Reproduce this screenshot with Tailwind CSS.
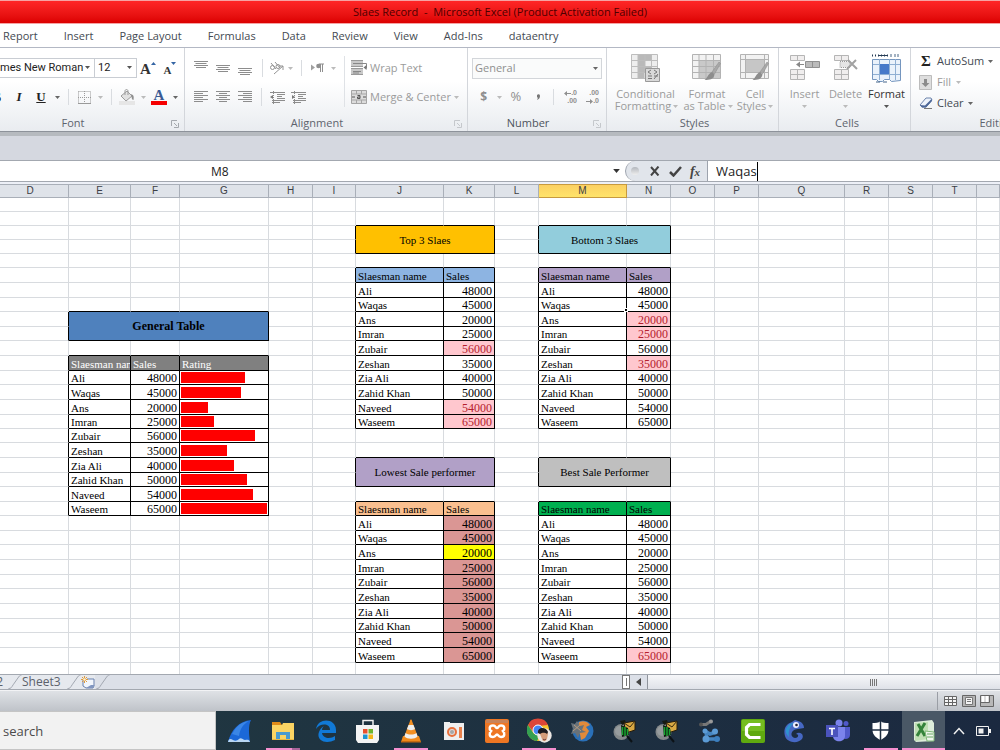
<!DOCTYPE html>
<html lang="en">

<head>
    <meta charset="UTF-8">
    <meta name="viewport" content="width=device-width, initial-scale=1.0">
    <title>Slaes Record - Microsoft Excel (Product Activation Failed)</title>
    <script src="https://cdn.jsdelivr.net/npm/@tailwindcss/browser@4"></script>
</head>

<body class="h-screen flex flex-col overflow-hidden bg-[#d5d9e1] font-['Open_Sans',sans-serif] text-[11px] text-[#444a52]">
    <!-- Shared symbols -->
    <svg class="hidden" xmlns="http://www.w3.org/2000/svg">
        <symbol id="caret" viewBox="0 0 5 3"><path d="M0 0h5L2.5 3z" fill="currentColor" /></symbol>
        <symbol id="launcher" viewBox="0 0 8 8">
            <path d="M.5 6V.5H6M3 3l3 3M7.5 3v4.500H3" fill="none" stroke="currentColor" />
        </symbol>
        <symbol id="slash" viewBox="0 0 14 15">
            <path d="M0 14.500c3 0 3-1 5-4L11 2c1-1.500 2-2 3-2" fill="none" stroke="#9da3ac" />
        </symbol>
        <symbol id="brush" viewBox="0 0 16 20">
            <path d="M14.500 0L16 1.500 10 12 7.500 10z" fill="#a8a8a8" stroke="#8a8a8a" stroke-width=".5" />
            <path d="M7.500 10l2.500 2.500c-1 5-5 5.500-10 5.500 3-1.500 3-6 7.500-8z" fill="#8d8d8d" />
        </symbol>
        <symbol id="snail" viewBox="0 0 24 24">
            <circle cx="8.500" cy="13" r="8" fill="#84898b" />
            <circle cx="7" cy="12" r="5" fill="#979c9e" />
            <path d="M7 2l5-1 1 3-4 2z" fill="#151a12" />
            <path d="M11 4l11-2v9l-9 3z" fill="#d8a843" stroke="#241b0b" />
            <path d="M11 4l6 4 5-6" fill="none" stroke="#3a2c10" />
            <path d="M8 6l7 3 1 7-7 2z" fill="#0c1d0e" />
            <path d="M9.500 8v8M12 8v9M14.500 10v6" stroke="#18a432" stroke-width="1.500" />
            <path d="M14 17l5 6" stroke="#0c1216" stroke-width="2" />
        </symbol>
    </svg>

    <!-- Title bar -->
    <header class="shrink-0 h-[24px] border-y border-[#f6a3a3] bg-linear-to-b from-[#ff2626] to-[#dc0000] flex items-center justify-center">
        <h1 class="text-[11px] text-[#4d0000] whitespace-pre">Slaes Record  -  Microsoft Excel (Product Activation Failed)</h1>
    </header>

    <!-- Ribbon tabs -->
    <nav class="shrink-0 h-[24px] bg-white border-b border-[#b3b8c4] flex items-center gap-[26px] pl-[3px] pt-[2px] whitespace-nowrap">
        <a href="#">Report</a>
        <a href="#">Insert</a>
        <a href="#">Page Layout</a>
        <a href="#">Formulas</a>
        <a href="#">Data</a>
        <a href="#">Review</a>
        <a href="#">View</a>
        <a href="#">Add-Ins</a>
        <a href="#">dataentry</a>
    </nav>

    <!-- Ribbon -->
    <div class="shrink-0 h-[83px] flex overflow-hidden bg-linear-to-b from-white from-40% to-[#e9ecf0] whitespace-nowrap">
        <!-- Font -->
        <section class="relative w-[185px] shrink-0 border-r border-[#d3d6db] flex flex-col pt-[10px]">
            <div class="h-[20px] flex items-center">
                <div class="relative w-[95px] h-[20px]">
                    <select aria-label="Font" class="appearance-none w-full h-full bg-white border border-l-0 border-[#c9cdd3] font-['Roboto',sans-serif] text-[#222] outline-none">
                        <option>mes New Roman</option>
                    </select>
                    <svg class="absolute right-[5px] top-[8px] w-[5px] h-[3px] text-[#555]"><use href="#caret" /></svg>
                </div>
                <div class="relative w-[42px] h-[20px]">
                    <select aria-label="Font size" class="appearance-none w-full h-full bg-white border border-l-0 border-[#c9cdd3] pl-[3px] font-['Roboto',sans-serif] text-[#222] outline-none">
                        <option>12</option>
                    </select>
                    <svg class="absolute right-[5px] top-[8px] w-[5px] h-[3px] text-[#555]"><use href="#caret" /></svg>
                </div>
                <button aria-label="Grow font" class="w-[22px] h-[20px] pt-px flex justify-center font-['Liberation_Serif',serif] font-bold text-[15px] leading-[20px] text-[#333]">A<svg class="w-[5px] h-[3px] mt-[3px] rotate-180 text-[#3465a4]"><use href="#caret" /></svg></button>
                <button aria-label="Shrink font" class="w-[22px] h-[20px] pt-[2px] flex justify-center font-['Liberation_Serif',serif] font-bold text-[11px] leading-[20px] text-[#333]">A<svg class="w-[5px] h-[3px] mt-[2px] text-[#3465a4]"><use href="#caret" /></svg></button>
            </div>
            <div class="h-[20px] mt-[9px] flex items-center text-[#666]">
                <button class="w-[8px] flex justify-end overflow-hidden pr-[7px] font-['Liberation_Serif',serif] font-bold text-[14px] text-[#222]">B</button>
                <button class="w-[22px] font-['Liberation_Serif',serif] font-bold italic text-[13px] text-[#222]">I</button>
                <button class="w-[22px] font-['Liberation_Serif',serif] font-bold underline text-[13px] text-[#222]">U</button>
                <button aria-label="Underline styles" class="w-[10px] flex justify-center"><svg class="w-[5px] h-[3px]"><use href="#caret" /></svg></button>
                <div class="w-[13px] flex justify-center"><div class="w-px h-[16px] bg-[#d9dce0]"></div></div>
                <button aria-label="Borders" class="w-[19px] flex justify-center">
                    <svg class="w-[13px] h-[13px]" viewBox="0 0 13 13" fill="none" stroke="#9a9a9a"><path d="M.5.5h12v11M.5.5v11M6.500 0v12M0 6.500h13" stroke-dasharray="1 1" /><path d="M0 12.500h13" /></svg>
                </button>
                <button aria-label="Border styles" class="w-[12px] flex justify-center text-[#bbb]"><svg class="w-[5px] h-[3px]"><use href="#caret" /></svg></button>
                <div class="w-[10px] flex justify-center"><div class="w-px h-[16px] bg-[#d9dce0]"></div></div>
                <button aria-label="Fill color" class="w-[22px] flex justify-center">
                    <svg class="w-[16px] h-[16px]" viewBox="0 0 16 16"><path d="M0 12h16v4H0z" fill="#e6e6e6" /><path d="M2 7l6-5 5 5-6 5z" fill="#e2e2e2" stroke="#9b9b9b" /><path d="M6 6V2c0-2 3-2 3 0v4" fill="none" stroke="#9b9b9b" /><path d="M12 5c3 1 3 3 2.500 6-1 0-2-1-2-4z" fill="#8f8f8f" /></svg>
                </button>
                <button aria-label="Fill colors" class="w-[10px] flex justify-center text-[#bbb]"><svg class="w-[5px] h-[3px]"><use href="#caret" /></svg></button>
                <button aria-label="Font color" class="w-[22px] flex flex-col items-center font-['Liberation_Serif',serif] font-bold text-[15px] leading-[12px] text-[#3a5a94]">A<span class="w-[16px] h-[4px] bg-[#f50000]"></span></button>
                <button aria-label="Font colors" class="w-[10px] flex justify-center"><svg class="w-[5px] h-[3px]"><use href="#caret" /></svg></button>
            </div>
            <h2 class="mt-auto h-[16px] leading-[16px] pr-[38px] text-center text-[#5d636d]">Font</h2>
            <svg class="absolute right-[5px] bottom-[3px] w-[8px] h-[8px] text-[#a5a9ae]"><use href="#launcher" /></svg>
        </section>

        <!-- Alignment -->
        <section class="relative w-[283px] shrink-0 border-r border-[#d3d6db] flex flex-col pt-[8px]">
            <div class="flex text-[#9b9b9b]">
                <div class="w-[160px] border-r border-[#dfe2e6] pl-[5px] pt-[2px]">
                    <div class="h-[20px] flex items-center">
                        <button aria-label="Top align" class="w-[22px] flex justify-center"><svg class="w-[14px] h-[14px]" viewBox="0 0 14 14" stroke="#8d8d8d"><path d="M0 .5h14M1.500 2.500h11M0 4.500h14M2 6.500h10" /></svg></button>
                        <button aria-label="Middle align" class="w-[22px] flex justify-center"><svg class="w-[14px] h-[14px]" viewBox="0 0 14 14" stroke="#8d8d8d"><path d="M0 4.500h14M1.500 6.500h11M0 8.500h14M2 10.500h10" /></svg></button>
                        <button aria-label="Bottom align" class="w-[22px] flex justify-center"><svg class="w-[14px] h-[14px]" viewBox="0 0 14 14" stroke="#8d8d8d"><path d="M0 7.500h14M1.500 9.500h11M0 11.500h14M2 13.500h10" /></svg></button>
                        <div class="w-[12px] flex justify-center"><div class="w-px h-[18px] bg-[#d9dce0]"></div></div>
                        <button aria-label="Orientation" class="w-[18px] flex justify-center"><svg class="w-[16px] h-[14px]" viewBox="0 0 16 14" fill="none" stroke="#949494"><circle cx="3.500" cy="6.500" r="2" /><path d="M2 2l5 6M6 1l5 6M5 13l9-8M14 9V5h-3.500" /><circle cx="9" cy="5.500" r="2" /></svg></button>
                        <button aria-label="Orientations" class="w-[8px] flex justify-center text-[#bbb]"><svg class="w-[5px] h-[3px]"><use href="#caret" /></svg></button>
                        <div class="w-[14px] flex justify-center"><div class="w-px h-[16px] bg-[#d9dce0]"></div></div>
                        <button aria-label="Text direction" class="w-[18px] flex justify-center"><svg class="w-[13px] h-[10px]" viewBox="0 0 13 10"><path d="M0 1.500L4 4.500 0 7.500z" fill="#a0a0a0" /><path d="M8 1h5M9.500 1v8M11.500 1v8" stroke="#8f8f8f" /><circle cx="7.500" cy="3" r="2.300" fill="#8f8f8f" /></svg></button>
                        <button aria-label="Text directions" class="w-[14px] flex justify-center text-[#bbb]"><svg class="w-[5px] h-[3px]"><use href="#caret" /></svg></button>
                    </div>
                    <div class="h-[20px] mt-[9px] flex items-center">
                        <button aria-label="Align left" class="w-[22px] flex justify-center"><svg class="w-[14px] h-[12px]" viewBox="0 0 14 12" stroke="#8d8d8d"><path d="M0 .5h14M0 2.500h9M0 4.500h14M0 6.500h9M0 8.500h14M0 10.500h9" /></svg></button>
                        <button aria-label="Center" class="w-[22px] flex justify-center"><svg class="w-[14px] h-[12px]" viewBox="0 0 14 12" stroke="#8d8d8d"><path d="M0 .5h14M3 2.500h8M0 4.500h14M3 6.500h8M0 8.500h14M3 10.500h8" /></svg></button>
                        <button aria-label="Align right" class="w-[22px] flex justify-center"><svg class="w-[14px] h-[12px]" viewBox="0 0 14 12" stroke="#8d8d8d"><path d="M0 .5h14M5 2.500h9M0 4.500h14M5 6.500h9M0 8.500h14M5 10.500h9" /></svg></button>
                        <div class="w-[10px] flex justify-center"><div class="w-px h-[18px] bg-[#d9dce0]"></div></div>
                        <button aria-label="Decrease indent" class="w-[22px] flex justify-center"><svg class="w-[15px] h-[13px]" viewBox="0 0 15 13" stroke="#8d8d8d"><path d="M0 1.500h15M7 3.500h8M7 5.500h5M7 7.500h8M2 9.500h13M2 11.500h8" /><path d="M3.500 0v13" stroke-dasharray="1 1" /><path d="M0 6l3-2v4z" fill="#777" stroke="none" /></svg></button>
                        <button aria-label="Increase indent" class="w-[20px] flex justify-center"><svg class="w-[15px] h-[13px]" viewBox="0 0 15 13" stroke="#8d8d8d"><path d="M0 1.500h15M7 3.500h8M7 5.500h5M7 7.500h8M2 9.500h13M2 11.500h8" /><path d="M3.500 0v13" stroke-dasharray="1 1" /><path d="M4 6L1 4v4z" fill="#777" stroke="none" /></svg></button>
                    </div>
                </div>
                <div class="pl-[6px] pt-[2px]">
                    <button class="h-[20px] flex items-center gap-[3px]">
                        <svg class="w-[16px] h-[16px]" viewBox="0 0 16 16"><path d="M0 1h12v5H0zM0 8.500h12v6H0z" fill="#c9c9c9" /><path d="M0 .5h12M0 6.500h12M0 8.500h12M0 14.500h12" stroke="#9a9a9a" /><path d="M2 3.500h13.500v5M2 11.500h8M2 13h6" fill="none" stroke="#888" /><path d="M15.500 5v5l-3-2.500z" fill="#777" /></svg>
                        Wrap Text
                    </button>
                    <button class="h-[20px] mt-[9px] flex items-center gap-[3px]">
                        <svg class="w-[16px] h-[14px]" viewBox="0 0 16 14"><path d="M.5.5h15v13H.5zM.5 4h15M.5 10h15M5.500.5V4M10.500.5V4M5.500 10v3.500M10.500 10v3.500" fill="#dcdcdc" stroke="#a5a5a5" /><path d="M1 7h3M12 7h3M6.500 5.500h2.500v3H6.500V7H9" fill="none" stroke="#555" /></svg>
                        Merge &amp; Center
                        <svg class="w-[5px] h-[3px] text-[#bbb]"><use href="#caret" /></svg>
                    </button>
                </div>
            </div>
            <h2 class="mt-auto h-[16px] leading-[16px] pr-[18px] text-center text-[#5d636d]">Alignment</h2>
            <svg class="absolute right-[5px] bottom-[3px] w-[8px] h-[8px] text-[#c5c8cc]"><use href="#launcher" /></svg>
        </section>

        <!-- Number -->
        <section class="relative w-[139px] shrink-0 border-r border-[#d3d6db] flex flex-col pt-[10px] px-[4px] text-[#8f8f8f]">
            <div class="relative h-[21px]">
                <select aria-label="Number format" class="appearance-none w-full h-full bg-[#fafbfb] border border-[#d3d6da] pl-[2px] outline-none">
                    <option>General</option>
                </select>
                <svg class="absolute right-[4px] top-[9px] w-[5px] h-[3px] text-[#666]"><use href="#caret" /></svg>
            </div>
            <div class="h-[20px] mt-[8px] flex items-center">
                <button class="w-[24px] font-bold text-[12px]">$</button>
                <button aria-label="Currency formats" class="w-[8px] flex justify-center text-[#bbb]"><svg class="w-[5px] h-[3px]"><use href="#caret" /></svg></button>
                <button class="w-[26px] text-[13px]">%</button>
                <button aria-label="Comma style" class="w-[20px] flex justify-center text-[#777]"><svg class="w-[5px] h-[6px]" viewBox="0 0 5 6"><path d="M1 1c1-1 3-1 3 1S3 5 1 6c1-2 1-2 0-3z" fill="currentColor" /></svg></button>
                <div class="w-[10px] flex justify-center"><div class="w-px h-[16px] bg-[#d9dce0]"></div></div>
                <button aria-label="Increase decimal" class="w-[22px] shrink-0 flex flex-col items-end pr-[3px] font-['Liberation_Sans',sans-serif] font-bold text-[7px] leading-[8px]">
                    <span class="flex items-center"><svg class="w-[7px] h-[5px]" viewBox="0 0 7 5"><path d="M0 2.500L3 0v5zM3 2h4v1H3z" fill="currentColor" /></svg>.0</span>
                    <span>.00</span>
                </button>
                <button aria-label="Decrease decimal" class="w-[22px] shrink-0 flex flex-col items-end pr-[3px] font-['Liberation_Sans',sans-serif] font-bold text-[7px] leading-[8px]">
                    <span>.00</span>
                    <span class="flex items-center"><svg class="w-[7px] h-[5px]" viewBox="0 0 7 5"><path d="M7 2.500L4 0v5zM0 2h4v1H0z" fill="currentColor" /></svg>.0</span>
                </button>
            </div>
            <h2 class="mt-auto h-[16px] leading-[16px] pr-[18px] text-center text-[#4d535d]">Number</h2>
            <svg class="absolute right-[5px] bottom-[3px] w-[8px] h-[8px] text-[#c5c8cc]"><use href="#launcher" /></svg>
        </section>

        <!-- Styles -->
        <section class="w-[172px] shrink-0 border-r border-[#d3d6db] flex flex-col pt-[6px] pl-[4px] text-[#9b9b9b]">
            <div class="flex leading-[12px]">
                <button class="w-[69px] flex flex-col items-center">
                    <svg class="w-[30px] h-[28px] mb-[6px]" viewBox="0 0 30 28"><path d="M.5.5h26v24H.5z" fill="#eee" /><path d="M7 .5h13v6H7zM7 6h7v6H7zM7 12h13v6H7zM7 18h6v6H7z" fill="#b9b9b9" /><path d="M.5.5h26v24H.5zM7 .5v24M14 .5v24M20.500.5v24M.5 6.500h26M.5 12.500h26M.5 18.500h26" fill="none" stroke="#bdbdbd" /><path d="M14.500 14.500h14v13h-14z" fill="#d9d9d9" stroke="#999" /><path d="M20 16l-3 2 3 2M17 22h4M17 24.500h4M23 16l3 2-3 2M23 25l4-5M23 22h4" fill="none" stroke="#777" /></svg>
                    <span>Conditional</span>
                    <span class="flex items-center gap-[2px] pl-[2px]">Formatting<svg class="w-[5px] h-[3px] text-[#bbb]"><use href="#caret" /></svg></span>
                </button>
                <button class="w-[54px] flex flex-col items-center">
                    <svg class="w-[30px] h-[28px] mb-[6px]" viewBox="0 0 30 28"><path d="M.5.5h28v24H.5z" fill="#f2f2f2" /><path d="M7 6h22v18H7z" fill="#c9c9c9" /><path d="M.5.5h28v24H.5zM7 .5v24M14 .5v24M21.500.5v24M.5 6.500h28M.5 12.500h28M.5 18.500h28" fill="none" stroke="#b3b3b3" /><use href="#brush" x="11" y="8" width="19" height="20" /></svg>
                    <span>Format</span>
                    <span class="flex items-center gap-[2px] pl-[2px]">as Table<svg class="w-[5px] h-[3px] text-[#bbb]"><use href="#caret" /></svg></span>
                </button>
                <button class="w-[42px] flex flex-col items-center">
                    <svg class="w-[30px] h-[28px] mb-[6px]" viewBox="0 0 30 28"><path d="M.5.5h28v24H.5z" fill="#f2f2f2" /><path d="M6 5h18v13H6z" fill="#c6c6c6" /><path d="M.5.5h28v24H.5zM5.500.5v24M24.500.5v24M.5 5.500h28M.5 18.500h28" fill="none" stroke="#b3b3b3" /><use href="#brush" x="11" y="8" width="19" height="20" /></svg>
                    <span>Cell</span>
                    <span class="flex items-center gap-[2px]">Styles<svg class="w-[5px] h-[3px] text-[#bbb]"><use href="#caret" /></svg></span>
                </button>
            </div>
            <h2 class="mt-auto h-[16px] leading-[16px] text-center text-[#5d636d]">Styles</h2>
        </section>

        <!-- Cells -->
        <section class="w-[132px] shrink-0 border-r border-[#d3d6db] flex flex-col pt-[6px] pl-[5px] text-[#9b9b9b]">
            <div class="flex leading-[12px]">
                <button class="w-[41px] flex flex-col items-center">
                    <svg class="w-[30px] h-[28px] mb-[6px]" viewBox="0 0 30 28" fill="#f0eeee" stroke="#b5b5b5"><path d="M.5 1.500h14v5H.5zM7.500 1.500v5M.5 15.500h14v10H.5zM7.500 15.500v10M.5 20.500h14" /><path d="M15.500 7.500h14v6h-14zM22.500 7.500v6" fill="#bbb" stroke="#909090" /><path d="M14 10.500H8" stroke="#888" /><path d="M6 10.500l4-3v6z" fill="#888" stroke="none" /></svg>
                    <span>Insert</span>
                    <svg class="w-[5px] h-[3px] mt-[5px] text-[#bbb]"><use href="#caret" /></svg>
                </button>
                <button class="w-[41px] flex flex-col items-center">
                    <svg class="w-[30px] h-[28px] mb-[6px]" viewBox="0 0 30 28" fill="#f0eeee" stroke="#b5b5b5"><path d="M3.500 1.500h14v5h-14zM10.500 1.500v5M3.500 15.500h14v10h-14zM10.500 15.500v10M3.500 20.500h14" /><path d="M9 7.500h10v6H9z" fill="#e5e5e5" stroke="#999" stroke-dasharray="1 1" /><path d="M17 6l9 9M25 6l-9 9" stroke="#a2a2a2" stroke-width="2" /></svg>
                    <span>Delete</span>
                    <svg class="w-[5px] h-[3px] mt-[5px] text-[#bbb]"><use href="#caret" /></svg>
                </button>
                <button class="w-[41px] flex flex-col items-center text-[#333]">
                    <svg class="w-[31px] h-[29px] mb-[5px]" viewBox="0 0 31 29"><path d="M1 1.500h18" stroke="#263c55" stroke-width="2" stroke-dasharray="1 2" /><path d="M7 1.500h10" stroke="#263c55" /><path d="M20 0v3M24 0v3M27 0v3" stroke="#496785" /><path d="M1.500 5.500h28v21l-9 1-2-2h-5l-2 2h-4l-2-2h-4z" fill="#eaf2fb" stroke="#7596bf" /><path d="M8.500 5v21M18.500 5v21M24.500 5v21M2 10.500h27M2 20.500h27" stroke="#8fafd3" /><path d="M9 10h9v10H9z" fill="#4679c9" /><path d="M5 28h4M12 28h4" stroke="#456489" /></svg>
                    <span>Format</span>
                    <svg class="w-[5px] h-[3px] mt-[5px] text-[#555]"><use href="#caret" /></svg>
                </button>
            </div>
            <h2 class="mt-auto h-[16px] leading-[16px] text-center text-[#5d636d]">Cells</h2>
        </section>

        <!-- Editing -->
        <section class="w-[172px] shrink-0 flex flex-col pt-[4px] pl-[8px]">
            <button class="h-[18px] flex items-center gap-[4px]">
                <span class="w-[14px] text-center font-['Liberation_Serif',serif] font-bold text-[15px] text-[#222]">Σ</span>
                AutoSum
                <svg class="w-[5px] h-[3px] text-[#666]"><use href="#caret" /></svg>
            </button>
            <button class="h-[18px] mt-[3px] flex items-center gap-[5px] text-[#9b9b9b]">
                <svg class="w-[13px] h-[15px]" viewBox="0 0 13 15"><path d="M.5.5h12v14H.5z" fill="#dedede" stroke="#bcbcbc" /><path d="M5 4h3v4h2.500l-4 4-4-4H5z" fill="#8c8c8c" /></svg>
                Fill
                <svg class="w-[5px] h-[3px] text-[#bbb]"><use href="#caret" /></svg>
            </button>
            <button class="h-[18px] mt-[3px] flex items-center gap-[4px]">
                <svg class="w-[14px] h-[12px]" viewBox="0 0 14 12"><path d="M1 8l6-7h5l1 2-6 7H3z" fill="#eef3fb" stroke="#6d83ab" /><path d="M1 8l5 .5L12.500 2l.5 2-6 6.500H3z" fill="#4d6798" /><path d="M5 11.500h8" stroke="#777" /></svg>
                Clear
                <svg class="w-[5px] h-[3px] text-[#666]"><use href="#caret" /></svg>
            </button>
            <h2 class="mt-auto h-[16px] leading-[16px] pr-[8px] text-center text-[#5d636d]">Editing</h2>
        </section>
    </div>

    <div class="shrink-0 h-[29px] bg-[#d5d8e0] border-t border-t-[#8d929a]">
        <div class="h-[4px] bg-[#b6babf]"></div>
    </div>

    <!-- Formula bar -->
    <div class="shrink-0 h-[22px] bg-white border-y border-[#a3a8b0] flex items-center text-[13px] text-[#222]">
        <input aria-label="Name box" value="M8" class="w-[608px] h-full pl-[211px] text-[12px] outline-none">
        <button aria-label="Names" class="w-[17px] flex justify-center text-[#333]"><svg class="w-[7px] h-[4px]"><use href="#caret" /></svg></button>
        <div class="w-[83px] h-full rounded-l-full border-l border-r border-[#9da3ad] bg-[#e1e5eb] flex items-center">
            <div class="w-[17px] flex justify-center"><div class="w-[8px] h-[8px] rounded-full bg-linear-to-b from-[#b3b7bd] to-[#eee]"></div></div>
            <button aria-label="Cancel" class="w-[23px] flex justify-center"><svg class="w-[10px] h-[10px]" viewBox="0 0 10 10" fill="none" stroke="#444" stroke-width="2"><path d="M1 1l7.500 8.500M8.500 .5L1 9.500" /></svg></button>
            <button aria-label="Enter" class="w-[18px] flex justify-center"><svg class="w-[13px] h-[11px]" viewBox="0 0 13 11" fill="none" stroke="#444" stroke-width="2.500"><path d="M1 6l3.500 3.500L12 1" /></svg></button>
            <button class="w-[22px] font-['Liberation_Serif',serif] italic font-bold text-[14px] text-[#444]">f<span class="text-[11px]">x</span></button>
        </div>
        <input aria-label="Formula" value="Waqas" class="field-sizing-content h-full ml-[8px] text-[13px] outline-none">
        <div class="w-px h-[19px] bg-black"></div>
    </div>
    <div class="shrink-0 h-[2px] bg-[#edf0f7]"></div>

    <!-- Worksheet -->
    <main class="flex-1 min-h-0 overflow-hidden bg-white">
        <table class="w-full table-fixed border-separate border-spacing-0">
            <colgroup>
                <col class="w-[69px]"><col class="w-[62px]"><col class="w-[49px]"><col class="w-[89px]">
                <col class="w-[44px]"><col class="w-[43px]"><col class="w-[88px]"><col class="w-[51px]">
                <col class="w-[44px]"><col class="w-[88px]"><col class="w-[44px]"><col class="w-[44px]">
                <col class="w-[44px]"><col class="w-[86px]"><col class="w-[44px]"><col class="w-[44px]">
                <col class="w-[44px]"><col>
            </colgroup>
            <thead>
                <tr id="columnHeads"></tr>
            </thead>
            <tbody id="sheet" class="font-['Liberation_Serif',serif] text-black"></tbody>
        </table>
    </main>

    <!-- Sheet tabs and horizontal scrollbar -->
    <div class="shrink-0 h-[16px] border-y border-[#a3a8b0] bg-[#dce0e8] flex items-center text-[12px] text-[#5b616b]">
        <div class="flex-1 h-full flex items-center">
            <div class="h-full flex items-center bg-[#e6e9ee]">
                <button class="w-[8px] flex justify-end pr-[5px] leading-[14px]">2</button>
                <svg class="w-[14px] h-[14px]"><use href="#slash" /></svg>
                <button class="leading-[14px]">Sheet3</button>
                <svg class="w-[14px] h-[14px] ml-[6px]"><use href="#slash" /></svg>
                <button aria-label="Insert worksheet">
                    <svg class="w-[14px] h-[13px]" viewBox="0 0 14 13"><path d="M2 4v6l3 2h7l1-2V3H6" fill="#f2f6fc" stroke="#6980ad" /><path d="M5 12h7l1.500-3H10z" fill="#8196c0" /><path d="M3.500 0v7M0 3.500h7M1 1l5 5M6 1L1 6" stroke="#e09b3d" /><circle cx="3.500" cy="3.500" r="1.300" fill="#fff2cf" /></svg>
                </button>
            </div>
            <svg class="w-[14px] h-[14px] ml-px"><use href="#slash" /></svg>
        </div>
        <div class="w-[8px] h-[14px] border border-[#777] bg-white flex justify-center items-center"><div class="w-px h-[8px] bg-[#777]"></div></div>
        <button aria-label="Scroll left" class="w-[17px] flex justify-center"><svg class="w-[5px] h-[8px]" viewBox="0 0 5 8"><path d="M5 0v8L0 4z" fill="#444" /></svg></button>
        <div class="w-[353px] h-full border-l border-[#8f949c] bg-linear-to-b from-[#f6f7f9] to-[#dfe2e8] flex items-center">
            <div class="flex gap-px ml-[222px]">
                <div class="w-px h-[7px] bg-[#777]"></div><div class="w-px h-[7px] bg-[#777]"></div><div class="w-px h-[7px] bg-[#777]"></div><div class="w-px h-[7px] bg-[#777]"></div>
            </div>
        </div>
    </div>

    <!-- Status bar -->
    <footer class="shrink-0 h-[21px] border-t border-[#f2f3f5] bg-linear-to-b from-[#dfe2e6] to-[#bfc3c9] flex items-center justify-end gap-[4px] pr-[6px]">
        <div class="w-px h-[18px] mr-[2px] bg-[#9a9ea5]"></div>
        <button aria-label="Normal view"><svg class="w-[14px] h-[11px]" viewBox="0 0 14 11"><path d="M.5.5h12v9H.5zM4.500.5v9M8.500.5v9M.5 3.500h12M.5 6.500h12" fill="#f6f6f6" stroke="#666" /></svg></button>
        <button aria-label="Page layout view"><svg class="w-[14px] h-[12px]" viewBox="0 0 14 12"><path d="M.5.5h13v11H.5z" fill="#b4b4b4" stroke="#666" /><path d="M3.500 2.500h7v7h-7zM5 4.500h4M5 6.500h4" fill="#f4f4f4" stroke="#777" /></svg></button>
        <button aria-label="Page break preview"><svg class="w-[14px] h-[12px]" viewBox="0 0 14 12"><path d="M.5.5h13v11H.5z" fill="#b8b8b8" stroke="#666" /><path d="M1.500 1h3v6h-3zM5.500 1h3v6h-3z" fill="#fff" /><path d="M1 7.500h8.500V1" fill="none" stroke="#666" /></svg></button>
    </footer>

    <!-- Taskbar -->
    <div class="shrink-0 h-[39px] bg-linear-to-r from-[#213941] to-[#1b2940] flex items-center">
        <input aria-label="Search" placeholder="search" class="w-[216px] h-full bg-[#f2f2f2] border-y border-r border-[#c5c5c5] pl-[3px] text-[13px] text-[#444] placeholder:text-[#4b4b4b] outline-none">
        <nav class="w-[729px] h-full pl-[3px] flex">
            <button aria-label="Wireshark" class="flex-1 flex items-center justify-center">
                <svg class="w-[24px] h-[24px]" viewBox="0 0 24 24"><path d="M0 23C3 11 11 2 23 1c-3 6-2 14-1 22z" fill="#1b68d8" /><path d="M4 15C9 6 14 3 21 2c-6 3-9 8-10 15z" fill="#3a86e6" /><path d="M0 23c1-4 3-3 5-2s4 1 6-1 4 1 6 1 4-1 5 2z" fill="#b9d6f4" /></svg>
            </button>
            <button aria-label="File Explorer" class="relative flex-1 flex items-center justify-center">
                <svg class="w-[22px] h-[20px]" viewBox="0 0 22 20"><path d="M0 1h8l2 3H0z" fill="#e08b18" /><path d="M0 4h10l1-2h11v17H0z" fill="#fbd463" /><path d="M4 18v-7h14v7h-4v-4H8v4z" fill="#4a9bd0" /><path d="M0 18h22v1H0z" fill="#e9b842" /></svg>
                <span class="absolute bottom-0 w-[34px] h-[2px] bg-[#f58fcf] border-r-8 border-[#a9659a]"></span>
            </button>
            <button aria-label="Edge" class="flex-1 flex items-center justify-center">
                <svg class="w-[22px] h-[22px]" viewBox="0 0 22 22"><path d="M1 9C3-3 21-2 21 10v3H7c1 6 9 6 13 3v4C10 25 1 20 4 12c1-3 3-5 5-6-1 1-2 2-2 4h8C15 3 5 3 1 9z" fill="#1179d6" /></svg>
            </button>
            <button aria-label="Microsoft Store" class="flex-1 flex items-center justify-center">
                <svg class="w-[24px] h-[24px]" viewBox="0 0 24 24"><path d="M7 6V1.500h10V6" fill="none" stroke="#f2f2f2" stroke-width="1.500" /><path d="M0 6h23v15l-2 3H2l-2-3z" fill="#f4f4f4" /><path d="M7 10h4.500v4.500H7z" fill="#e8502e" /><path d="M12.500 10H17v4.500h-4.500z" fill="#6bb52c" /><path d="M7 15.500h4.500V20H7z" fill="#1c95d4" /><path d="M12.500 15.500H17V20h-4.500z" fill="#f5b617" /></svg>
            </button>
            <button aria-label="VLC" class="relative flex-1 flex items-center justify-center">
                <svg class="w-[22px] h-[24px]" viewBox="0 0 22 24"><path d="M3 17h16l2 6H1z" fill="#f08a1c" /><path d="M10 2c0-2 2-2 2 0l6 16c-3 3-11 3-14 0z" fill="#f28f22" /><path d="M8.500 6h5l1.500 4c-2 1.500-6 1.500-8 0zM5.500 14c3 2 8 2 11 0l1 3.500c-3 3-10 3-13 0z" fill="#eee" /><path d="M1 22h20v1.500H1z" fill="#c66a10" /></svg>
                <span class="absolute bottom-0 w-[34px] h-[2px] bg-[#f58fcf]"></span>
            </button>
            <button aria-label="Recorder" class="flex-1 flex items-center justify-center">
                <svg class="w-[22px] h-[20px]" viewBox="0 0 22 20"><path d="M1 1h6v1h14v17H1z" fill="#efefef" /><circle cx="9" cy="11" r="4" fill="#dcdcdc" stroke="#e9713c" stroke-width="2" /><path d="M16 6h3v11h-3z" fill="#e9814c" /><circle cx="9" cy="11" r="2" fill="#a7a7a7" /></svg>
            </button>
            <button aria-label="XAMPP" class="flex-1 flex items-center justify-center">
                <svg class="w-[24px] h-[24px]" viewBox="0 0 24 24"><rect width="24" height="24" rx="2" fill="#ee7623" /><path d="M1 1h22v3H1z" fill="#c98257" /><path d="M8 6.500c-4 0-4 4-2 5.500-2 2-2 6 2 6 3 0 2.500-2.500 4-2.500s1 2.500 4 2.500c4 0 4-4 2-6 2-1.500 2-5.500-2-5.500-3 0-2.500 2.500-4 2.500s-1-2.500-4-2.500z" fill="none" stroke="#fff" stroke-width="2.500" /></svg>
            </button>
            <button aria-label="Chrome" class="relative flex-1 flex items-center justify-center">
                <svg class="w-[25px] h-[25px]" viewBox="0 0 25 25"><circle cx="11" cy="12" r="11" fill="#f7c62f" /><path d="M1 7A11 11 0 0121 7l-10 1-4 7z" fill="#dc4638" /><path d="M1 7l6 9 6 1-3 6A11 11 0 011 7z" fill="#34a052" /><circle cx="11" cy="12" r="5" fill="#4285f4" stroke="#fff" /><circle cx="17.500" cy="17.500" r="7.200" fill="#ede8e4" /><path d="M13 16c0-6 8-6 8 0l-1 5c-2 3-4 3-5 0z" fill="#d39c79" /><path d="M11 15c-1-6 8-7 10-1l-1 2c-3-2-5-1-7 0z" fill="#1b1b1f" /><path d="M16 21c1 1 2 1 3 0" stroke="#633" fill="none" /></svg>
                <span class="absolute bottom-0 w-[34px] h-[2px] bg-[#f58fcf]"></span>
            </button>
            <button aria-label="Globe" class="flex-1 flex items-center justify-center">
                <svg class="w-[24px] h-[24px]" viewBox="0 0 24 24"><circle cx="13" cy="12" r="10.500" fill="#2a70b8" /><path d="M9 3c5-2 9 0 11 3l-4 2 3 4-4 7-4 2-1-6-4-3z" fill="#e08a3b" /><path d="M1 4l4 1 2-3 3 5 4-1-2 5 4 2-6 1-2 5-3-5-4 1 2-5z" fill="#68727a" /><path d="M4 6l7 6M3 12l7-6" stroke="#b79b7e" /></svg>
            </button>
            <button aria-label="Mail scanner" class="flex-1 flex items-center justify-center"><svg class="w-[24px] h-[24px]"><use href="#snail" /></svg></button>
            <button aria-label="Mail scanner 2" class="flex-1 flex items-center justify-center"><svg class="w-[24px] h-[24px]"><use href="#snail" /></svg></button>
            <button aria-label="Molecule viewer" class="flex-1 flex items-center justify-center">
                <svg class="w-[24px] h-[24px]" viewBox="0 0 24 24"><path d="M3 5.500l5 0 5-3.500" stroke="#777" stroke-width="3" fill="none" /><path d="M7 12l5 3 6-2M9 20l-1-7M9 20h10" fill="none" stroke="#4585c1" stroke-width="3.500" /><circle cx="3" cy="5.500" r="2" fill="#555" /><circle cx="13" cy="2.500" r="2" fill="#999" /><circle cx="7" cy="12" r="2.500" fill="#5c9bd5" /><circle cx="17" cy="12.500" r="3" fill="#5c9bd5" /><circle cx="8" cy="20" r="3.500" fill="#5c9bd5" /><circle cx="19" cy="20" r="3" fill="#3c7fbf" /></svg>
            </button>
            <button aria-label="Camtasia" class="flex-1 flex items-center justify-center">
                <svg class="w-[24px] h-[24px]" viewBox="0 0 24 24"><rect width="24" height="24" rx="2" fill="#5fa90f" /><path d="M1 1h22v11H1z" fill="#75bd20" /><path d="M19.500 5.500H8.500l-3 3v7l3 3h11" fill="none" stroke="#fff" stroke-width="3.200" /></svg>
            </button>
            <button aria-label="Chameleon" class="flex-1 flex items-center justify-center">
                <svg class="w-[22px] h-[24px]" viewBox="0 0 22 24"><path d="M8 3l3-2 3 1c4 1 6 4 6 7l-6 1c-7 0-9 8-3 9 4 0 4-4 1-4 3-3 9 0 6 5-4 5-15 4-17-3C-1 10 2 5 8 3z" fill="#4668c4" /><path d="M2 10c2-4 4-6 8-6-4 3-6 8-5 14-2-2-4-5-3-8z" fill="#2e93ce" /><circle cx="12" cy="6" r="3" fill="#eef" /><circle cx="12.500" cy="6" r="1.300" fill="#223" /></svg>
            </button>
            <button aria-label="Teams" class="flex-1 flex items-center justify-center">
                <svg class="w-[24px] h-[24px]" viewBox="0 0 24 24"><circle cx="13" cy="4" r="3.500" fill="#7b83eb" /><circle cx="20" cy="4.500" r="2.500" fill="#5059c9" /><path d="M16 8h8v8c0 4-5 5-7 3z" fill="#5059c9" /><path d="M7 8h12v9c0 7-12 7-12 0z" fill="#7b83eb" /><path d="M0 6h12v12H0z" fill="#4b53bc" /><path d="M3 9.500h6M6 9.500V16" stroke="#fff" stroke-width="1.600" /></svg>
            </button>
            <button aria-label="Security" class="relative flex-1 flex items-center justify-center">
                <svg class="w-[17px] h-[19px]" viewBox="0 0 17 19"><path d="M8.500 0c2 2 5 2 8 2v7c0 5-4 8-8 10-4-2-8-5-8-10V2c3 0 6 0 8-2z" fill="#fff" /><path d="M8.500 0v19M0 9h17" stroke="#1d2d41" stroke-width="1.500" /></svg>
                <span class="absolute bottom-0 w-[34px] h-[2px] bg-[#f58fcf]"></span>
            </button>
            <button aria-label="Excel" class="relative flex-1 flex items-center justify-center bg-[#4a5866]">
                <svg class="w-[22px] h-[22px]" viewBox="0 0 22 22"><path d="M1 2L19 0l2 3v18l-18 1-2-2z" fill="#deedda" /><path d="M2 3l13-1v17L2 21z" fill="#c0dfb4" /><path d="M5 4l7 12M12 3L4 16" stroke="#34833a" stroke-width="3" /><path d="M12 11l9 1v9h-7z" fill="#eef5eb" stroke="#7fb878" /><path d="M14 14h6M14 17h6" stroke="#6ba766" /></svg>
                <span class="absolute inset-x-0 bottom-0 h-[2px] bg-[#f58fcf]"></span>
            </button>
        </nav>
        <button aria-label="Show hidden icons" class="w-[28px] flex justify-center"><svg class="w-[12px] h-[8px]" viewBox="0 0 12 8" fill="none" stroke="#f0f0f0" stroke-width="1.500"><path d="M1 7l5-5.500L11 7" /></svg></button>
        <button aria-label="Battery" class="w-[20px] flex justify-center"><svg class="w-[15px] h-[10px]" viewBox="0 0 15 10"><path d="M.5.5h12v9H.5z" fill="none" stroke="#f0f0f0" /><path d="M2.500 2.500h5v5h-5zM13 3h2v4h-2z" fill="#f0f0f0" /></svg></button>
    </div>

    <script>
        const columns = ['D', 'E', 'F', 'G', 'H', 'I', 'J', 'K', 'L', 'M', 'N', 'O', 'P', 'Q', 'R', 'S', 'T', ''];
        const rowHeights = [14, 14, 14, 14, 14, 15, 15, 14, 15, 14, 15, 15, 14, 15, 15, 14, 14, 15, 15, 14, 15, 14, 15, 14, 15, 15, 14, 15, 15, 14, 15, 15, 14];
        const sales = [['Ali', 48000], ['Waqas', 45000], ['Ans', 20000], ['Imran', 25000], ['Zubair', 56000],
            ['Zeshan', 35000], ['Zia Ali', 40000], ['Zahid Khan', 50000], ['Naveed', 54000], ['Waseem', 65000]];
        const pink = 'bg-[#ffc7ce] text-[#b5202d]';

        // row = first row of the two-row banner, the header row follows one empty row later
        const blocks = [
            { row: 9, col: 'E', span: 3, title: 'General Table', banner: 'bg-[#4f81bd] font-bold text-[12px]', head: 'bg-[#808080] text-white', rating: true, mark: () => '' },
            { row: 3, col: 'J', span: 2, title: 'Top 3 Slaes', banner: 'bg-[#ffc000] text-[11px]', head: 'bg-[#8db4e2]', mark: v => v >= 54000 ? pink : '' },
            { row: 3, col: 'M', span: 2, title: 'Bottom 3 Slaes', banner: 'bg-[#92cddc] text-[11px]', head: 'bg-[#b1a0c7]', mark: v => v <= 35000 ? pink : '' },
            { row: 19, col: 'J', span: 2, title: 'Lowest Sale performer', banner: 'bg-[#b1a0c7] text-[11px]', head: 'bg-[#fabf8f]', mark: v => v === 20000 ? 'bg-[#ffff00]' : 'bg-[#da9694]' },
            { row: 19, col: 'M', span: 2, title: 'Best Sale Performer', banner: 'bg-[#bfbfbf] text-[11px]', head: 'bg-[#00b050]', mark: v => v === 65000 ? pink : '' },
        ];

        const cells = {};
        for (const b of blocks) {
            const c = columns.indexOf(b.col);
            for (let r = b.row; r < b.row + 2; r++) {
                for (let i = 0; i < b.span; i++) cells[r + ',' + (c + i)] = { covered: true };
            }
            cells[b.row + ',' + c] = { html: b.title, cls: 'text-center align-middle ' + b.banner, span: b.span };
            ['Slaesman name', 'Sales', 'Rating'].slice(0, b.span).forEach((t, i) => {
                cells[(b.row + 3) + ',' + (c + i)] = { html: t, cls: 'pl-[2px] align-bottom text-[11px] ' + b.head };
            });
            sales.forEach(([name, value], i) => {
                const r = b.row + 4 + i;
                cells[r + ',' + c] = { html: name, cls: 'pl-[2px] align-bottom text-[11px]' };
                cells[r + ',' + (c + 1)] = { html: value, cls: 'pr-[2px] align-bottom text-right text-[12px] ' + b.mark(value) };
                if (b.rating) {
                    cells[r + ',' + (c + 2)] = { html: `<div class="mx-px mb-px h-[11px] bg-[#ff0000]" style="width:${value / 65000 * 98}%"></div>`, cls: 'align-bottom' };
                }
            });
        }

        document.getElementById('columnHeads').innerHTML = columns.map(name => {
            const state = name === 'M' ? 'bg-linear-to-b from-[#fbd063] to-[#ffe46a] border-[#c79a3f]' : 'bg-[#dfe3e9] border-[#a9afb8]';
            return `<th class="h-[14px] p-0 ${name === 'D' ? 'pr-[8px]' : ''} border-t border-r border-b font-normal text-[10px] leading-[12px] text-[#3c4045] font-['Liberation_Sans',sans-serif] ${state}">${name}</th>`;
        }).join('');

        document.getElementById('sheet').innerHTML = rowHeights.map((height, i) => {
            const r = i + 1;
            const tds = columns.map((_, c) => {
                const cell = cells[r + ',' + c];
                if (cell && cell.covered) return '';
                const right = cell || cells[r + ',' + (c + 1)] ? 'border-r-black' : 'border-r-[#d8dbdf]';
                const bottom = cell || cells[(r + 1) + ',' + c] ? 'border-b-black' : 'border-b-[#d8dbdf]';
                const spans = cell && cell.span ? `colspan="${cell.span}" rowspan="2"` : '';
                // M8 is being edited
                const active = r === 8 && columns[c] === 'M';
                const frame = active ? '<span class="absolute -inset-px border border-black"></span><span class="absolute -right-[2px] -bottom-px w-[4px] h-[4px] bg-black border border-white"></span>' : '';
                return `<td ${spans} class="p-0 border-r border-b leading-[12px] whitespace-nowrap ${active ? 'relative' : 'overflow-hidden'} ${right} ${bottom} ${cell ? cell.cls : ''}">${cell ? cell.html : ''}${frame}</td>`;
            }).join('');
            return `<tr style="height:${height}px">${tds}</tr>`;
        }).join('');
    </script>
</body>

</html>
